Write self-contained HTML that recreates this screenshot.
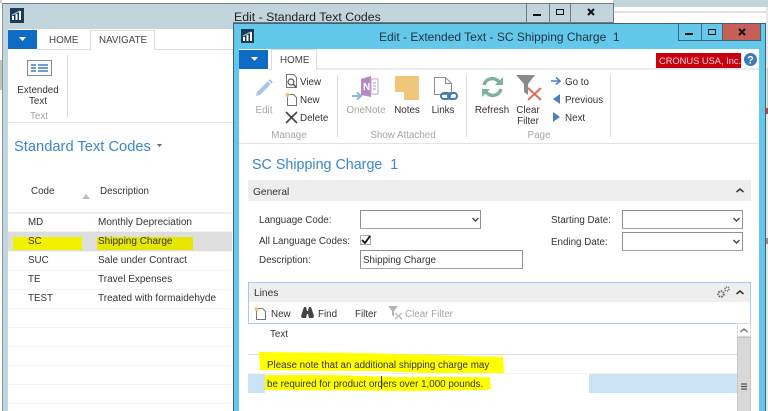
<!DOCTYPE html>
<html><head><meta charset="utf-8">
<style>
html,body{margin:0;padding:0;background:#fff}
#p{position:relative;width:768px;height:411px;overflow:hidden;background:#fff;font-family:"Liberation Sans",sans-serif;filter:blur(.35px)}
#p div,#p svg{position:absolute}
.t{font-size:9.800px;line-height:12px;color:#333;white-space:nowrap;margin-top:2px}
.g{color:#a5a5a5}
.c{transform:translateX(-50%)}
.sep{width:1px;background:#dcdcdc}
.sel{background:#fff;border:1px solid #8f8f8f;box-sizing:border-box;border-bottom-color:#a5a5a5}
.ln{height:1px;background:#f3f3f3;left:8px;width:224px}
</style></head><body><div id="p">

<!-- far background window -->
<div style="left:613px;top:0;width:155px;height:7px;background:#c2d5dc"></div>
<div style="left:613px;top:11px;width:155px;height:2px;background:#e2e2e2"></div>
<div style="left:766px;top:0;width:2px;height:411px;background:#e8e8e8"></div>
<div style="left:766px;top:0;width:2px;height:7px;background:#c2d5dc"></div>
<div style="left:767px;top:68px;width:1px;height:40px;background:#c8c8c8"></div>
<div style="left:766px;top:238px;width:2px;height:6px;background:#b08080"></div>
<div style="left:766px;top:108px;width:2px;height:6px;background:#b44"></div>
<div style="left:0;top:60px;width:2px;height:30px;background:#b9c6b9"></div>
<div style="left:0;top:0;width:2px;height:3px;background:#ccc"></div>

<!-- back window -->
<div style="left:2px;top:3px;width:612px;height:408px;background:#c2d5dc;border-top:1px solid #6d7d84;border-left:1px solid #8a979c;box-sizing:border-box"></div>
<div style="left:3px;top:23px;width:230px;height:1px;background:#c2d5dc"></div>
<div style="left:233px;top:3px;width:381px;height:20px;border-right:1px solid #6d7d84;border-bottom:1px solid #6d7d84;box-sizing:border-box"></div>
<div style="left:8px;top:29px;width:226px;height:382px;background:#fff"></div>

<svg style="left:10px;top:8px" width="14" height="15" viewBox="0 0 14 15"><rect width="14" height="15" fill="#1b3a57"/><path d="M2 12h2V8H2zM5.500 12h2V6h-2zM9 12h2V3H9z" fill="#fff"/><path d="M2 7l8-4" stroke="#9fd0ee" stroke-width="1" fill="none"/></svg>
<div class="t" style="left:234px;top:7px;font-size:12.300px;line-height:16px;color:#222">Edit - Standard Text Codes</div>

<!-- back buttons -->
<div style="left:526px;top:4px;width:88px;height:19px;border:1px solid #6d7d84;border-top:none;box-sizing:border-box;background:#c2d5dc"></div>
<div style="left:549px;top:4px;width:1px;height:19px;background:#6d7d84"></div>
<div style="left:570px;top:4px;width:1px;height:19px;background:#6d7d84"></div>
<div style="left:533px;top:14px;width:8px;height:2px;background:#111"></div>
<div style="left:556px;top:9px;width:8px;height:6px;border:1.500px solid #111;box-sizing:border-box"></div>
<svg style="left:586px;top:8px" width="10" height="9" viewBox="0 0 10 9"><path d="M2 1l6 6M8 1L2 7" stroke="#111" stroke-width="2"/></svg>

<!-- back tabs -->
<div style="left:8px;top:30px;width:29px;height:19px;background:#0f6cc5"></div>
<svg style="left:19px;top:37px" width="8" height="5"><path d="M0 0h7L3.500 4z" fill="#fff"/></svg>
<div style="left:37px;top:29px;width:197px;height:20px;background:#fff"></div>
<div class="t" style="left:49px;top:33px;color:#444">HOME</div>
<div style="left:90px;top:30px;width:65px;height:20px;background:#fff;border:1px solid #dcdcdc;border-bottom:none;box-sizing:border-box"></div>
<div class="t" style="left:99px;top:33px;color:#444">NAVIGATE</div>
<div style="left:37px;top:49px;width:53px;height:1px;background:#dcdcdc"></div>
<div style="left:155px;top:49px;width:79px;height:1px;background:#dcdcdc"></div>
<svg style="left:27px;top:60px" width="25" height="16" viewBox="0 0 25 16"><rect x=".5" y=".5" width="24" height="15" fill="#fafafa" stroke="#8c8c8c"/><path d="M4 5h5M4 8h5M4 11h5" stroke="#6b9ccc" stroke-width="2"/><path d="M11 5h10M11 8h10M11 11h10" stroke="#6b9ccc" stroke-width="2"/></svg>
<div class="t c" style="left:38px;top:83px">Extended</div>
<div class="t c" style="left:38px;top:94px">Text</div>
<div class="t c g" style="left:39px;top:109px">Text</div>
<div class="sep" style="left:67px;top:55px;height:62px"></div>
<div style="left:8px;top:122px;width:226px;height:1px;background:#e3e3e3"></div>

<div class="t" style="left:14px;top:136px;font-size:14.700px;line-height:18px;color:#3a87cf">Standard Text Codes</div>
<svg style="left:157px;top:144px" width="6" height="4"><path d="M0 0h5L2.500 3z" fill="#666"/></svg>
<div class="t" style="left:31px;top:183.500px">Code</div>
<svg style="left:82px;top:194px" width="8" height="5"><path d="M0 5h8L4 0z" fill="#bdbdbd"/></svg>
<div class="t" style="left:100px;top:183.500px">Description</div>
<div style="left:8px;top:212px;width:224px;height:2px;background:#eee"></div>

<div style="left:8px;top:232px;width:224px;height:19px;background:#dedede"></div>
<div style="left:13px;top:237px;width:69px;height:13px;background:#f1f100"></div>
<div style="left:97px;top:237px;width:96px;height:13px;background:#e6e600"></div>
<div class="t" style="left:28px;top:214.500px">MD</div><div class="t" style="left:98px;top:214.500px;font-size:10px">Monthly Depreciation</div>
<div class="t" style="left:28px;top:233.500px">SC</div><div class="t" style="left:98px;top:233.500px;font-size:10px">Shipping Charge</div>
<div class="t" style="left:28px;top:252.500px">SUC</div><div class="t" style="left:98px;top:252.500px;font-size:10px">Sale under Contract</div>
<div class="t" style="left:28px;top:271.500px">TE</div><div class="t" style="left:98px;top:271.500px;font-size:10px">Travel Expenses</div>
<div class="t" style="left:28px;top:290.500px">TEST</div><div class="t" style="left:98px;top:290.500px;font-size:10px">Treated with formaidehyde</div>
<div class="ln" style="top:231px"></div><div class="ln" style="top:251px"></div><div class="ln" style="top:270px"></div><div class="ln" style="top:289px"></div>
<div class="ln" style="top:308px"></div><div class="ln" style="top:327px"></div><div class="ln" style="top:346px"></div><div class="ln" style="top:365px"></div><div class="ln" style="top:384px"></div><div class="ln" style="top:403px"></div>

<!-- front window -->
<div style="left:233px;top:23px;width:533px;height:388px;background:#63c8e9;border:1px solid #3f6475;border-bottom:none;box-sizing:border-box"></div>
<div style="left:239px;top:49px;width:520px;height:362px;background:#fff"></div>

<svg style="left:241px;top:29px" width="13" height="14" viewBox="0 0 13 14"><rect width="13" height="14" fill="#1b3a57"/><path d="M2 12h2V8H2zM5.500 12h2V6h-2zM9 12h2V3H9z" fill="#fff"/><path d="M2 7l8-4" stroke="#9fd0ee" stroke-width="1" fill="none"/></svg>
<div class="t" style="left:379px;top:27px;font-size:12px;line-height:16px;color:#1c3340">Edit - Extended Text - SC Shipping Charge&nbsp; 1</div>

<!-- front buttons -->
<div style="left:678px;top:24px;width:44px;height:17px;border:1px solid #3f6475;border-top:none;border-right:none;box-sizing:border-box"></div>
<div style="left:701px;top:24px;width:1px;height:17px;background:#3f6475"></div>
<div style="left:722px;top:24px;width:39px;height:17px;background:#c65f58;border-bottom:1px solid #3f6475;border-left:1px solid #3f6475;border-right:1px solid #3f6475;box-sizing:border-box"></div>
<div style="left:685px;top:33px;width:8px;height:2px;background:#111"></div>
<div style="left:708px;top:29px;width:8px;height:6px;border:1.500px solid #111;box-sizing:border-box"></div>
<svg style="left:737px;top:28px" width="10" height="9" viewBox="0 0 10 9"><path d="M2 1l6 6M8 1L2 7" stroke="#111" stroke-width="2"/></svg>

<!-- front tabs -->
<div style="left:239px;top:50px;width:29px;height:19px;background:#0f6cc5"></div>
<svg style="left:251px;top:57px" width="8" height="5"><path d="M0 0h7L3.500 4z" fill="#fff"/></svg>
<div style="left:271px;top:49px;width:46px;height:21px;background:#fff;border:1px solid #dcdcdc;border-bottom:none;box-sizing:border-box"></div>
<div class="t" style="left:280px;top:53px;color:#444">HOME</div>
<div style="left:268px;top:69px;width:3px;height:1px;background:#e0e0e0"></div>
<div style="left:317px;top:68px;width:442px;height:2px;background:#ececec"></div>
<div style="left:656px;top:53px;width:85px;height:15px;background:#c9000f"></div>
<div class="t" style="left:659px;top:53px;color:#f3d5d5;font-size:9.300px">CRONUS USA, Inc.</div>
<svg style="left:744px;top:53px" width="13" height="13" viewBox="0 0 13 13"><circle cx="6.500" cy="6.500" r="6.500" fill="#3f7ab5"/><text x="6.500" y="10.500" font-size="11" font-weight="bold" text-anchor="middle" fill="#fff" font-family="Liberation Sans">?</text></svg>

<!-- manage group -->
<svg style="left:254px;top:78px" width="20" height="20" viewBox="0 0 20 20"><path d="M16 1l3 3L6 17l-4 1 1-4z" fill="#a9c8e4"/><path d="M14 3l3 3" stroke="#fff"/></svg>
<div class="t c g" style="left:264px;top:103px">Edit</div>
<svg style="left:285px;top:74px" width="13" height="15" viewBox="0 0 13 15"><path d="M1.500.5h7l3 3v10h-10z" fill="#fff" stroke="#777"/><circle cx="6" cy="8" r="3" fill="none" stroke="#555" stroke-width="1.200"/><path d="M8 10l3 3" stroke="#555" stroke-width="1.500"/></svg>
<div class="t" style="left:300px;top:75px">View</div>
<svg style="left:285px;top:92px" width="13" height="15" viewBox="0 0 13 15"><path d="M2.500 2.500h6l3 3v8h-9z" fill="#fff" stroke="#777"/><circle cx="2.500" cy="3" r="2" fill="#f2c46a"/></svg>
<div class="t" style="left:300px;top:93px">New</div>
<svg style="left:285px;top:111px" width="13" height="13" viewBox="0 0 13 13"><path d="M1 1l11 11M12 1L1 12" stroke="#444" stroke-width="1.600"/></svg>
<div class="t" style="left:300px;top:111px">Delete</div>
<div class="t c g" style="left:289px;top:128px">Manage</div>
<div class="sep" style="left:337px;top:75px;height:62px"></div>

<!-- show attached -->
<svg style="left:352px;top:76px" width="27" height="24" viewBox="0 0 27 24"><path d="M9 3l10-3v21l-10-2z" fill="#b58ac4"/><rect x="19" y="3" width="7" height="15" fill="#fff" stroke="#c3a3d0"/><path d="M21 7h3M21 10h3M21 13h3" stroke="#b58ac4"/><text x="11" y="14" font-size="10" font-weight="bold" fill="#fff" font-family="Liberation Sans">N</text><path d="M0 20h8M5 16.500l4 3.500-4 3.500" stroke="#8fb8de" stroke-width="2" fill="none"/></svg>
<div class="t c g" style="left:366px;top:103px">OneNote</div>
<svg style="left:395px;top:76px" width="24" height="24" viewBox="0 0 24 24"><path d="M0 0h24v24H9V16H0z" fill="#efc77b"/><path d="M0 16h9v8z" fill="#fff"/><path d="M0 16.500h8.500V24" fill="none" stroke="#fff"/></svg>
<div class="t c" style="left:407px;top:103px">Notes</div>
<svg style="left:434px;top:76px" width="24" height="25" viewBox="0 0 24 25"><path d="M.5.500h11l6 6v11H.5z" transform="translate(0 1)" fill="#fff" stroke="#8e8e8e"/><path d="M11.500 1.500v6h6" fill="none" stroke="#8e8e8e"/><rect x="7" y="17" width="9" height="6" rx="3" fill="none" stroke="#3f7ab5" stroke-width="2"/><rect x="14" y="17" width="9" height="6" rx="3" fill="none" stroke="#3f7ab5" stroke-width="2"/></svg>
<div class="t c" style="left:443px;top:103px">Links</div>
<div class="t c g" style="left:403px;top:128px">Show Attached</div>
<div class="sep" style="left:466px;top:75px;height:62px"></div>

<!-- page group -->
<svg style="left:481px;top:76px" width="23" height="22" viewBox="0 0 23 22"><path d="M3 9a8.500 8.500 0 0 1 15-3" fill="none" stroke="#7eb29f" stroke-width="3.500"/><path d="M22 1v8h-8z" fill="#7eb29f"/><path d="M20 13a8.500 8.500 0 0 1-15 3" fill="none" stroke="#7eb29f" stroke-width="3.500"/><path d="M1 21v-8h8z" fill="#7eb29f"/></svg>
<div class="t c" style="left:492px;top:103px">Refresh</div>
<svg style="left:516px;top:75px" width="27" height="26" viewBox="0 0 27 26"><path d="M0 0h19l-7 9v11l-4-3V9z" fill="#8a8a8a"/><path d="M12 13l13 12M25 13L12 25" stroke="#dd6f56" stroke-width="2"/></svg>
<div class="t c" style="left:528px;top:103px">Clear</div>
<div class="t c" style="left:528px;top:114px">Filter</div>
<svg style="left:551px;top:76px" width="10" height="10" viewBox="0 0 10 10"><path d="M0 5h8M5 1.500l4 3.500-4 3.500" fill="none" stroke="#4f86bd" stroke-width="1.600"/></svg>
<div class="t" style="left:565px;top:75px">Go to</div>
<svg style="left:553px;top:94px" width="7" height="10" viewBox="0 0 7 10"><path d="M7 0v10L0 5z" fill="#4a82ba"/></svg>
<div class="t" style="left:565px;top:93px">Previous</div>
<svg style="left:553px;top:112px" width="7" height="10" viewBox="0 0 7 10"><path d="M0 0v10l7-5z" fill="#4a82ba"/></svg>
<div class="t" style="left:565px;top:111px">Next</div>
<div class="t c g" style="left:539px;top:128px">Page</div>
<div class="sep" style="left:610px;top:75px;height:62px"></div>
<div style="left:239px;top:143px;width:520px;height:1px;background:#e3e3e3"></div>

<!-- title -->
<div class="t" style="left:252px;top:153.500px;font-size:14.300px;line-height:18px;color:#3a87cf;white-space:pre">SC Shipping Charge  1</div>

<!-- general -->
<div style="left:248px;top:180px;width:503px;height:21px;background:#eee"></div>
<div class="t" style="left:253px;top:185px;font-size:10.200px">General</div>
<svg style="left:736px;top:188px" width="8" height="5"><path d="M.5 4L4 1l3.500 3" fill="none" stroke="#333" stroke-width="1.500"/></svg>
<div class="t" style="left:259px;top:213px">Language Code:</div>
<div class="sel" style="left:360px;top:210px;width:121px;height:19px"></div>
<svg style="left:472px;top:217px" width="7" height="5"><path d="M.5 1L3.500 4l3-3" fill="none" stroke="#444" stroke-width="1.400"/></svg>
<div class="t" style="left:259px;top:234px">All Language Codes:</div>
<div style="left:360px;top:235px;width:11px;height:10px;background:#fff;border:1px solid #a8a8a8;box-sizing:border-box"></div>
<svg style="left:360px;top:234px" width="12" height="11" viewBox="0 0 12 11"><path d="M2 6l3 3 5-7" fill="none" stroke="#111" stroke-width="1.800"/></svg>
<div class="t" style="left:259px;top:253px">Description:</div>
<div class="sel" style="left:360px;top:250px;width:163px;height:19px"></div>
<div class="t" style="left:363px;top:253px">Shipping Charge</div>
<div class="t" style="left:551px;top:213px">Starting Date:</div>
<div class="sel" style="left:622px;top:210px;width:121px;height:19px"></div>
<svg style="left:733px;top:217px" width="7" height="5"><path d="M.5 1L3.500 4l3-3" fill="none" stroke="#444" stroke-width="1.400"/></svg>
<div class="t" style="left:551px;top:235px">Ending Date:</div>
<div class="sel" style="left:622px;top:232px;width:121px;height:19px"></div>
<svg style="left:733px;top:239px" width="7" height="5"><path d="M.5 1L3.500 4l3-3" fill="none" stroke="#444" stroke-width="1.400"/></svg>

<!-- lines -->
<div style="left:248px;top:282px;width:503px;height:42px;border:1px solid #a9c9f5;box-sizing:border-box;background:#fff"></div>
<div style="left:249px;top:283px;width:501px;height:19px;background:#eee"></div>
<div class="t" style="left:254px;top:286px;font-size:10.200px">Lines</div>
<svg style="left:716px;top:285px" width="14" height="14" viewBox="0 0 14 14"><circle cx="5" cy="9" r="2.800" fill="none" stroke="#666" stroke-width="2" stroke-dasharray="1.500 1"/><circle cx="11" cy="4" r="2" fill="none" stroke="#777" stroke-width="1.600" stroke-dasharray="1.200 .8"/></svg>
<svg style="left:736px;top:290px" width="8" height="5"><path d="M.5 4L4 1l3.500 3" fill="none" stroke="#333" stroke-width="1.500"/></svg>
<svg style="left:254px;top:306px" width="13" height="14" viewBox="0 0 13 14"><path d="M2.500 2.500h6l3 3v8h-9z" fill="#fff" stroke="#777"/><circle cx="2.500" cy="3" r="2" fill="#f2c46a"/></svg>
<div class="t" style="left:271px;top:307px">New</div>
<svg style="left:301px;top:307px" width="13" height="11" viewBox="0 0 13 11"><path d="M3 0h2l1 4h1l1-4h2l3 9-1 2H8L7 7H6L5 11H1L0 9z" fill="#444"/></svg>
<div class="t" style="left:318px;top:307px">Find</div>
<div class="t" style="left:355px;top:307px">Filter</div>
<svg style="left:388px;top:306px" width="15" height="14" viewBox="0 0 15 14"><path d="M0 0h10L6 5v6L4 9V5z" fill="#b4b4b4"/><path d="M7 7l7 6M14 7l-7 6" stroke="#bbb" stroke-width="1.300"/></svg>
<div class="t g" style="left:405px;top:307px">Clear Filter</div>

<div class="t" style="left:270px;top:327px">Text</div>
<div style="left:248px;top:354px;width:489px;height:1px;background:#dcdcdc"></div>
<div style="left:248px;top:373px;width:489px;height:1px;background:#f0f0f0"></div>
<div style="left:248px;top:374px;width:17px;height:19px;background:#cbe3f6"></div>
<div style="left:589px;top:374px;width:148px;height:19px;background:#cbe3f6"></div>
<svg style="left:254px;top:348px" width="251" height="50" viewBox="0 0 251 50"><path d="M5 4l100 1 80 2 64 2 1 16-82 0-40-2-122-1z" fill="#ffff00"/><path d="M11 27l70 0 60 2 95 0 1 12-8 1-70 1-148-1z" fill="#ffff00"/></svg>
<div class="t" style="left:267px;top:358px">Please note that an additional shipping charge may</div>
<div class="t" style="left:267px;top:377px">be required for product orders over 1,000 pounds.</div>
<div style="left:381px;top:376px;width:1px;height:13px;background:#333"></div>

<!-- scrollbar -->
<div style="left:737px;top:337px;width:14px;height:74px;background:#d9d9d9;border-left:1px solid #c8c8c8;border-right:1px solid #c8c8c8;border-top:1px solid #bbb;box-sizing:border-box"></div>
<div style="left:737px;top:323px;width:14px;height:14px;background:#fff;border:1px solid #ddd;box-sizing:border-box"></div>
<svg style="left:740px;top:328px" width="8" height="5"><path d="M.5 4L4 1l3.500 3" fill="none" stroke="#666" stroke-width="1.300"/></svg>
<svg style="left:741px;top:383px" width="7" height="8"><path d="M0 1h6M0 3.500h6M0 6h6" stroke="#555" stroke-width="1.200"/></svg>

</div></body></html>
